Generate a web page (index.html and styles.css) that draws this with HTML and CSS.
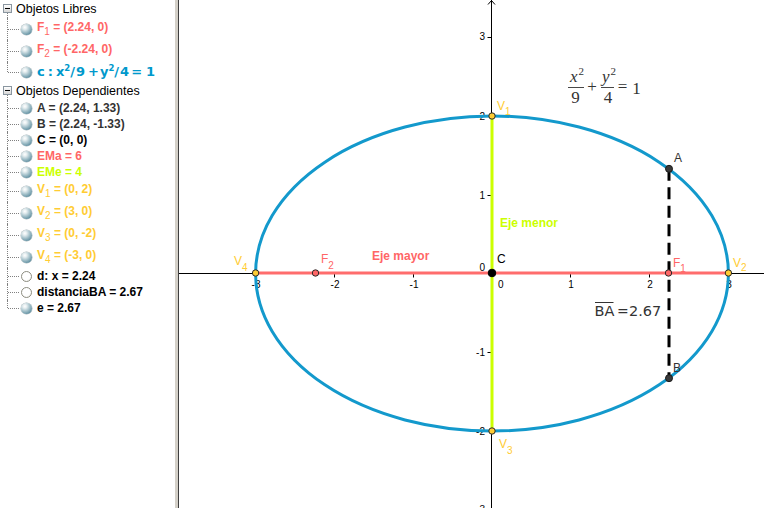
FILE: index.html
```html
<!DOCTYPE html>
<html lang="es">
<head>
<meta charset="utf-8">
<title>Elipse</title>
<link rel="stylesheet" href="styles.css">
</head>
<body>
<div class="app">
  <aside class="algebra">
    <div class="group">
      <div class="head"><span class="toggle"></span><span class="htext">Objetos Libres</span></div>
      <ul class="children">
        <li class="tall"><span class="ball"></span><span class="lbl red">F<sub>1</sub> = (2.24, 0)</span></li>
        <li class="tall"><span class="ball"></span><span class="lbl red">F<sub>2</sub> = (-2.24, 0)</span></li>
        <li class="mid"><span class="ball"></span><span class="lbl math blue"><span class="mc">c</span><span class="mcol">:</span><span class="mv">x</span><sup>2</sup><span class="msl">/</span><span class="md">9</span><span class="mop">+</span><span class="mv">y</span><sup>2</sup><span class="msl">/</span><span class="md">4</span><span class="mop meq">=</span><span class="md">1</span></span></li>
      </ul>
    </div>
    <div class="group">
      <div class="head"><span class="toggle"></span><span class="htext">Objetos Dependientes</span></div>
      <ul class="children">
        <li><span class="ball"></span><span class="lbl gray">A = (2.24, 1.33)</span></li>
        <li><span class="ball"></span><span class="lbl gray">B = (2.24, -1.33)</span></li>
        <li><span class="ball"></span><span class="lbl black">C = (0, 0)</span></li>
        <li><span class="ball"></span><span class="lbl red">EMa = 6</span></li>
        <li><span class="ball"></span><span class="lbl lime">EMe = 4</span></li>
        <li class="tall"><span class="ball"></span><span class="lbl yellow">V<sub>1</sub> = (0, 2)</span></li>
        <li class="tall"><span class="ball"></span><span class="lbl yellow">V<sub>2</sub> = (3, 0)</span></li>
        <li class="tall"><span class="ball"></span><span class="lbl yellow">V<sub>3</sub> = (0, -2)</span></li>
        <li class="tall"><span class="ball"></span><span class="lbl yellow">V<sub>4</sub> = (-3, 0)</span></li>
        <li><span class="ball empty"></span><span class="lbl black">d: x = 2.24</span></li>
        <li><span class="ball empty"></span><span class="lbl black">distanciaBA = 2.67</span></li>
        <li><span class="ball"></span><span class="lbl black">e = 2.67</span></li>
      </ul>
    </div>
  </aside>
  <div class="splitter"></div>
  <main class="view">
    <svg class="plot" width="585" height="508" viewBox="0 0 585 508" xmlns="http://www.w3.org/2000/svg">
      <!-- axes -->
      <g class="axis">
        <line x1="0" y1="273.5" x2="585" y2="273.5"/>
        <line x1="312.5" y1="0" x2="312.5" y2="508"/>
        <polyline points="309,4.5 312.5,0.5 316,4.5" fill="none"/>
        <line x1="76.5" y1="273.5" x2="76.5" y2="277.5"/>
        <line x1="155.5" y1="273.5" x2="155.5" y2="277.5"/>
        <line x1="234.5" y1="273.5" x2="234.5" y2="277.5"/>
        <line x1="391.5" y1="273.5" x2="391.5" y2="277.5"/>
        <line x1="470.5" y1="273.5" x2="470.5" y2="277.5"/>
        <line x1="549.5" y1="273.5" x2="549.5" y2="277.5"/>
        <line x1="308.5" y1="37.5" x2="312.5" y2="37.5"/>
        <line x1="308.5" y1="116.5" x2="312.5" y2="116.5"/>
        <line x1="308.5" y1="195.5" x2="312.5" y2="195.5"/>
        <line x1="308.5" y1="352.5" x2="312.5" y2="352.5"/>
        <line x1="308.5" y1="431.5" x2="312.5" y2="431.5"/>
        <line x1="308.5" y1="509.5" x2="312.5" y2="509.5"/>
      </g>
      <g class="ticklbl">
        <text x="77" y="287.5" text-anchor="middle">-3</text>
        <text x="156" y="287.5" text-anchor="middle">-2</text>
        <text x="235" y="287.5" text-anchor="middle">-1</text>
        <text x="319" y="287.5">0</text>
        <text x="392" y="287.5" text-anchor="middle">1</text>
        <text x="471" y="287.5" text-anchor="middle">2</text>
        <text x="550" y="287.5" text-anchor="middle">3</text>
        <text x="306" y="40" text-anchor="end">3</text>
        <text x="306" y="120" text-anchor="end">2</text>
        <text x="306" y="198.5" text-anchor="end">1</text>
        <text x="306" y="271" text-anchor="end">0</text>
        <text x="306" y="355.5" text-anchor="end">-1</text>
        <text x="306" y="434.5" text-anchor="end">-2</text>
        <text x="306" y="513" text-anchor="end">-3</text>
      </g>

      <ellipse class="ell" cx="313" cy="273.5" rx="236.4" ry="157.5"/>
      <line class="major" x1="76.6" y1="273" x2="549.4" y2="273"/>
      <line class="minor" x1="313" y1="116" x2="313" y2="431"/>
      <line class="dash" x1="490" y1="168.8" x2="490" y2="378.2"/>

      <text class="seglbl red" x="193" y="259.5">Eje mayor</text>
      <text class="seglbl lime" x="321" y="227">Eje menor</text>

      <!-- points -->
      <circle class="pt vy" cx="313" cy="116" r="3.2"/>
      <circle class="pt vy" cx="549.4" cy="273" r="3.2"/>
      <circle class="pt vy" cx="313" cy="431" r="3.2"/>
      <circle class="pt vy" cx="76.6" cy="273" r="3.2"/>
      <circle class="pt fr" cx="489.5" cy="273" r="3.2"/>
      <circle class="pt fr" cx="136.5" cy="273" r="3.2"/>
      <circle class="pt pc" cx="313" cy="273" r="3.8"/>
      <circle class="pt pa" cx="490" cy="168.8" r="3.5"/>
      <circle class="pt pa" cx="490" cy="378.2" r="3.5"/>

      <!-- point labels -->
      <g class="ptlbl">
        <text class="yellow" x="318" y="110">V<tspan class="sb" dy="5">1</tspan></text>
        <text class="yellow" x="554" y="267">V<tspan class="sb" dy="4">2</tspan></text>
        <text class="yellow" x="320" y="448">V<tspan class="sb" dy="6">3</tspan></text>
        <text class="yellow" x="55" y="265">V<tspan class="sb" dy="6">4</tspan></text>
        <text class="red" x="494" y="267">F<tspan class="sb" dy="5">1</tspan></text>
        <text class="red" x="142" y="263">F<tspan class="sb" dy="6">2</tspan></text>
        <text class="gray" x="495" y="162">A</text>
        <text class="gray" x="494" y="372">B</text>
        <text class="black" x="318" y="263">C</text>
      </g>

      <!-- equation -->
      <g class="tex">
        <text class="it" x="391" y="82">x</text>
        <text class="sup" x="399.5" y="74.5">2</text>
        <line x1="389" y1="87.5" x2="405" y2="87.5"/>
        <text x="396.5" y="103" text-anchor="middle">9</text>
        <text x="413" y="92" text-anchor="middle">+</text>
        <text class="it" x="423" y="82">y</text>
        <text class="sup" x="431.5" y="74.5">2</text>
        <line x1="422" y1="87.5" x2="435" y2="87.5"/>
        <text x="429" y="103" text-anchor="middle">4</text>
        <text x="443.5" y="92" text-anchor="middle">=</text>
        <text x="457.5" y="93.5" text-anchor="middle">1</text>
      </g>

      <!-- distance text -->
      <g class="dist">
        <line x1="416" y1="302.5" x2="434.5" y2="302.5"/>
        <text x="415.5" y="315.5">BA</text>
        <text class="eq" x="438" y="315.5">=</text>
        <text class="num" x="450" y="315.5">2.67</text>
      </g>
    </svg>
  </main>
</div>
</body>
</html>
```
FILE: styles.css
```css
html, body {
  margin: 0;
  padding: 0;
  background: #ffffff;
}

body {
  font-family: "Liberation Sans", Arial, sans-serif;
}

.app {
  display: flex;
  width: 764px;
  height: 508px;
  overflow: hidden;
}

/* ---------- algebra view ---------- */
.algebra {
  width: 175px;
  flex: none;
  background: #ffffff;
  font-size: 12px;
  color: #000000;
  overflow: hidden;
}

.splitter {
  width: 3px;
  flex: none;
  background: #d4d0c8;
  border-right: 1px solid #404040;
}

.head {
  position: relative;
  height: 18px;
  display: flex;
  align-items: center;
  white-space: nowrap;
}

.htext {
  font-size: 12.5px;
}

.head::after {
  content: "";
  position: absolute;
  left: 7px;
  top: 13px;
  bottom: 0;
  border-left: 1px dotted #808080;
}

.toggle {
  position: relative;
  width: 9px;
  height: 9px;
  box-sizing: border-box;
  margin: 0 4px 1px 3px;
  border: 1px solid #8a96a0;
  background: linear-gradient(#ffffff, #d6d6d6);
  flex: none;
}

.toggle::before {
  content: "";
  position: absolute;
  left: 1px;
  top: 3px;
  width: 5px;
  height: 1px;
  background: #000000;
}

.children {
  list-style: none;
  margin: 0;
  padding: 0;
}

.children li {
  position: relative;
  display: flex;
  align-items: center;
  height: 16px;
}

.children li.tall {
  height: 22px;
}

.children li.mid {
  height: 20px;
}

.children li::before {
  content: "";
  position: absolute;
  left: 7px;
  top: 0;
  bottom: 0;
  border-left: 1px dotted #808080;
}

.children li:last-child::before {
  bottom: 50%;
}

.children li::after {
  content: "";
  position: absolute;
  left: 8px;
  top: 50%;
  width: 11px;
  border-top: 1px dotted #808080;
}

.ball {
  width: 11px;
  height: 11px;
  flex: none;
  box-sizing: border-box;
  border-radius: 50%;
  margin-left: 21px;
  margin-right: 5px;
  background: radial-gradient(circle at 35% 30%, #ffffff 0%, #e6eef0 18%, #9dbcc6 50%, #5d8c9e 80%, #3f6676 100%);
  box-shadow: 0 0 0 0.5px rgba(60, 90, 100, 0.45);
}

.ball.empty {
  background: radial-gradient(circle at 40% 35%, #ffffff 0%, #ffffff 55%, #ecece4 100%);
  border: 1.5px solid #8c8c80;
  box-shadow: none;
}

.lbl {
  font-weight: bold;
  line-height: 16px;
  white-space: nowrap;
}

.lbl sub {
  font-size: 10px;
  font-weight: normal;
  vertical-align: -4px;
  line-height: 0;
}

.children li.tall .lbl {
  margin-bottom: 4px;
}

.red { color: #ff6666; fill: #ff6666; }
.blue { color: #0099cc; fill: #0099cc; }
.gray { color: #333333; fill: #333333; }
.black { color: #000000; fill: #000000; }
.lime { color: #ccff00; fill: #ccff00; }
.yellow { color: #ffcc33; fill: #ffcc33; }

/* inline formula of conic c */
.math {
  font-family: "DejaVu Sans", "Liberation Sans", sans-serif;
  font-size: 13px;
  line-height: 16px;
  margin-bottom: 1px;
}

.math sup {
  font-size: 8.5px;
  vertical-align: 5px;
  line-height: 0;
}

.math .mcol {
  margin: 0 3px 0 3px;
}

.math .msl {
  margin: 0 1px 0 0;
}

.math .mop {
  margin: 0 1px 0 3px;
}

.math .meq {
  margin: 0 4px 0 2px;
}

/* ---------- graphics view ---------- */
.view {
  flex: 1;
  min-width: 0;
  background: #ffffff;
}

.plot {
  display: block;
}

.axis line,
.axis polyline {
  stroke: #000000;
  stroke-width: 1;
}

.ticklbl text {
  font-family: "Liberation Sans", Arial, sans-serif;
  font-size: 10px;
  fill: #000000;
}

.ell {
  fill: none;
  stroke: #1399cc;
  stroke-width: 3;
}

.major {
  stroke: #ff6c6c;
  stroke-width: 3;
}

.minor {
  stroke: #ccff00;
  stroke-width: 3;
}

.dash {
  stroke: #000000;
  stroke-width: 3;
  stroke-dasharray: 12 6.5;
}

.seglbl {
  font-family: "Liberation Sans", Arial, sans-serif;
  font-size: 12px;
  font-weight: bold;
}

.pt {
  stroke: #2a2a2a;
  stroke-width: 1;
}

.pt.vy { fill: #ffcc33; }
.pt.fr { fill: #ff6666; }
.pt.pc { fill: #000000; stroke: #000000; }
.pt.pa { fill: #3a3a3a; stroke: #1a1a1a; }

.ptlbl text {
  font-family: "Liberation Sans", Arial, sans-serif;
  font-size: 12px;
}

.ptlbl .sb {
  font-size: 10px;
}

.tex text {
  font-family: "Liberation Serif", "Times New Roman", serif;
  font-size: 17px;
  fill: #333333;
}

.tex text.it {
  font-style: italic;
}

.tex text.sup {
  font-size: 11px;
}

.tex line {
  stroke: #333333;
  stroke-width: 0.9;
}

.dist text {
  font-family: "DejaVu Sans", "Liberation Sans", sans-serif;
  font-size: 14.5px;
  fill: #333333;
}

.dist text.eq {
  font-size: 14px;
}

.dist text.num {
  font-size: 14.5px;
}

.dist line {
  stroke: #333333;
  stroke-width: 1;
}
```
